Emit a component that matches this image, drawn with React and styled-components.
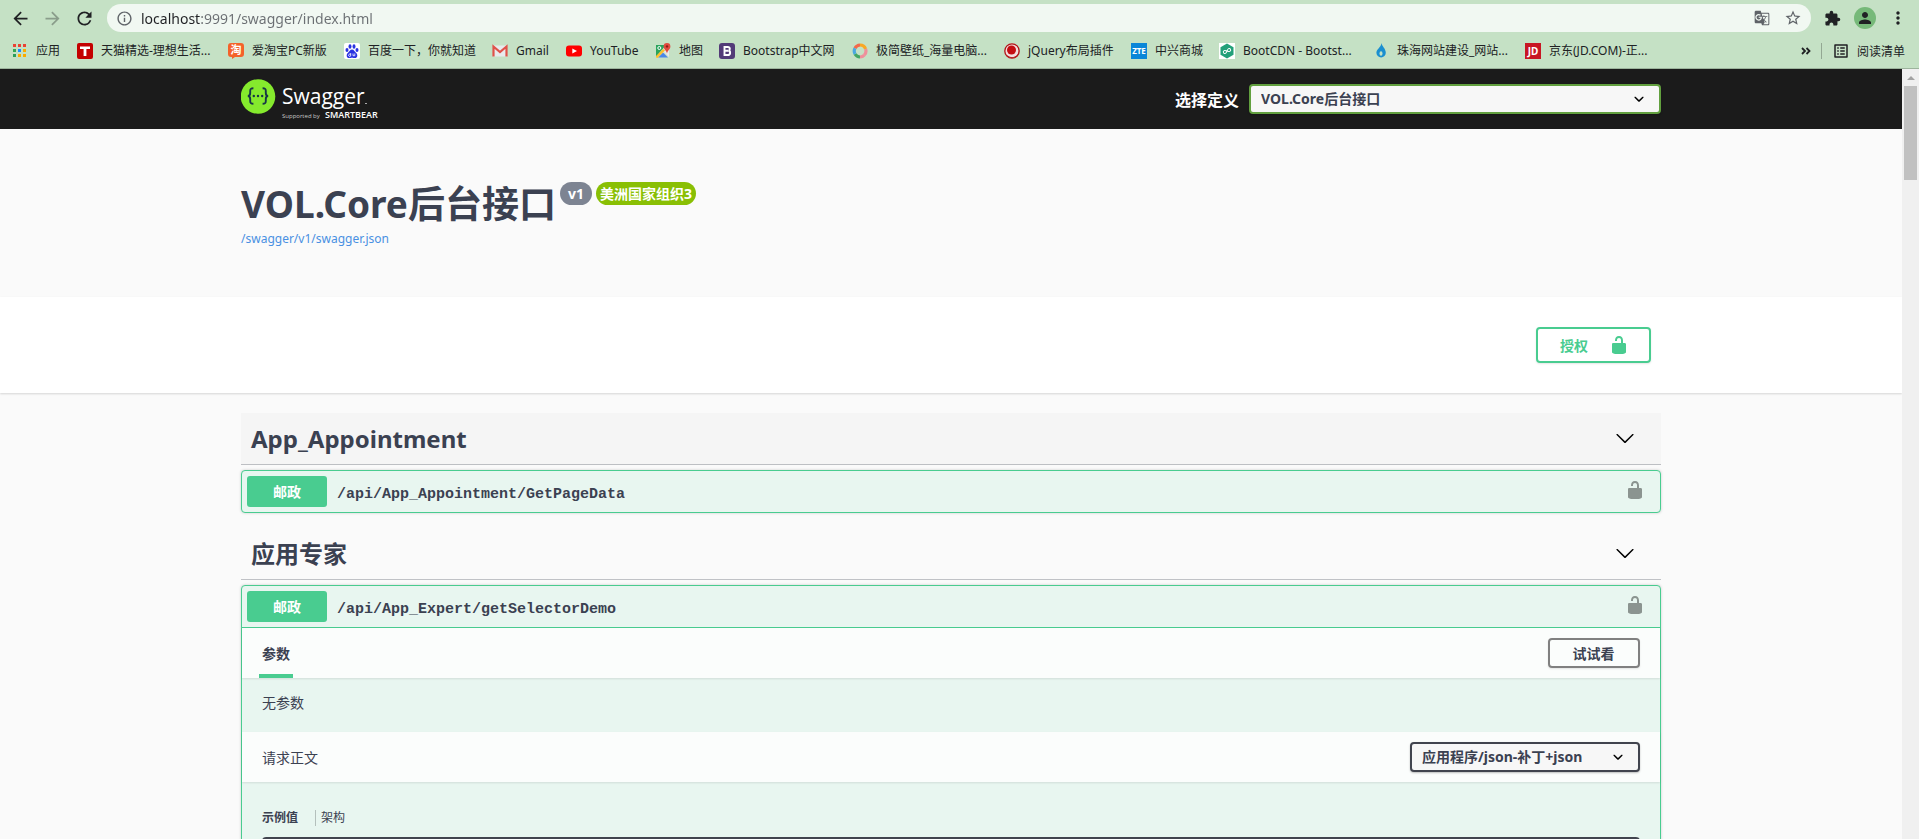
import React from "react";
import styled, { createGlobalStyle, css } from "styled-components";
import {
  MdArrowBack,
  MdArrowForward,
  MdRefresh,
  MdInfoOutline,
  MdGTranslate,
  MdStarBorder,
  MdExtension,
  MdPerson,
  MdMoreVert,
  MdOutlineListAlt,
} from "react-icons/md";

const ink = "#3b4151";
const green = "#49cc90";
const sans = `"Noto Sans", "Noto Sans CJK SC", sans-serif`;

const GlobalStyle = createGlobalStyle`
  *, *::before, *::after { box-sizing: border-box; }
  body { margin: 0; font-family: ${sans}; color: ${ink}; }
  h2, h3, p { margin: 0; }
  button, input, select { font-family: inherit; margin: 0; }
  button { cursor: pointer; }
  svg { display: block; flex: none; }
`;

/* ---------- browser frame ---------- */

const Window = styled.div`
  height: 100vh;
  display: flex;
  flex-direction: column;
  overflow: hidden;
`;

const BrowserBar = styled.header`
  flex: none;
  background: #c5e1c5;
  border-bottom: 1px solid #9db49d;
  color: #202124;
`;

const Toolbar = styled.div`
  display: flex;
  align-items: center;
  gap: 11px;
  height: 34px;
  padding: 2px 11px 0 10px;
`;

const IconButton = styled.button`
  display: grid;
  place-items: center;
  width: ${(p) => p.$width || 21}px;
  height: 22px;
  padding: 0;
  border: 0;
  border-radius: 50%;
  background: ${(p) => p.$fill || "none"};
  color: ${(p) => p.$color || "#202124"};
`;

const AddressBar = styled.div`
  flex: 1;
  display: flex;
  align-items: center;
  gap: 8px;
  height: 28px;
  margin-left: 1px;
  padding: 0 10px 0 9px;
  border-radius: 14px;
  background: #f1f8f2;
  color: #5f6368;
`;

const AddressInput = styled.input`
  flex: 1;
  min-width: 0;
  height: 24px;
  padding: 0;
  border: 0;
  outline: 0;
  font-size: 14px;
  color: #6b6f73;
  background: linear-gradient(to right, #202124 60px, #6b6f73 60px);
  background-clip: text;
  -webkit-text-fill-color: transparent;
`;

const AddressActions = styled.div`
  display: flex;
  gap: 12px;
`;

const BookmarkBar = styled.nav`
  display: flex;
  align-items: center;
  height: 34px;
  padding: 0 14px 0 12px;
`;

const Bookmark = styled.a`
  display: flex;
  align-items: center;
  gap: 8px;
  flex: none;
  width: ${(p) => p.$width}px;
  font-size: 12px;
  line-height: 20px;
  white-space: nowrap;
  color: #202124;
  text-decoration: none;
`;

const MoreBookmarks = styled.button`
  height: 16px;
  margin-left: auto;
  padding: 0 10px 0 0;
  border: 0;
  border-right: 1px solid #93a893;
  background: none;
  color: #202124;
`;

const ReadingList = styled.button`
  display: flex;
  align-items: center;
  gap: 7px;
  padding: 0 0 0 10px;
  border: 0;
  background: none;
  font-size: 12px;
  color: #202124;
`;

const Viewport = styled.div`
  flex: 1;
  min-height: 0;
  display: flex;
`;

const Page = styled.main`
  flex: 1;
  min-width: 0;
  overflow: hidden;
  background: #fafafa;
`;

const Scrollbar = styled.div`
  flex: none;
  width: 17px;
  display: flex;
  flex-direction: column;
  align-items: center;
  background: #f0f0f0;
`;

const ScrollArrow = styled.div`
  height: 17px;
  display: grid;
  place-items: center;
`;

const ScrollThumb = styled.div`
  width: 13px;
  height: 94px;
  background: #c1c1c1;
`;

/* ---------- page parts ---------- */

const Wrapper = styled.div`
  max-width: 1460px;
  margin: 0 auto;
  padding: 0 20px;
`;

const Topbar = styled.div`
  background: #1b1b1b;
`;

const TopbarRow = styled(Wrapper)`
  display: flex;
  align-items: center;
  justify-content: space-between;
  height: 60px;
`;

const SpecField = styled.div`
  display: flex;
  align-items: center;
  gap: 10px;
  flex: 0 1 486px;
`;

const SpecLabel = styled.label`
  flex: none;
  font-size: 16px;
  font-weight: 700;
  color: #fff;
`;

const SelectBox = styled.div`
  position: relative;
  flex: ${(p) => (p.$grow ? "1" : "0 0 230px")};

  svg {
    position: absolute;
    right: 12px;
    top: 5px;
    pointer-events: none;
  }
`;

const SelectInput = styled.select`
  appearance: none;
  display: block;
  width: 100%;
  height: 30px;
  padding: 0 40px 2px 10px;
  border: 2px solid ${(p) => p.$border};
  border-radius: 4px;
  background: #f7f7f7;
  box-shadow: 0 1px 2px rgba(0, 0, 0, 0.25);
  font-size: 14px;
  font-weight: 700;
  color: ${ink};
`;

const Info = styled(Wrapper)`
  padding-top: 50px;
  padding-bottom: 48px;
`;

const Title = styled.h2`
  display: flex;
  align-items: flex-start;
  gap: 4px;
  font-size: 37px;
  font-weight: 700;
  line-height: 50px;
`;

const Badge = styled.span`
  margin-top: 3px;
  padding: 0 ${(p) => (p.$wide ? 8 : 4)}px;
  border-radius: 12px;
  background: ${(p) => p.$fill};
  font-size: 14px;
  line-height: 23px;
  color: #fff;
`;

const SpecLink = styled.a`
  display: block;
  width: fit-content;
  font-size: 12px;
  line-height: 20px;
  color: #4990e2;
  text-decoration: none;
`;

const Scheme = styled.section`
  background: #fff;
  box-shadow: 0 1px 2px rgba(0, 0, 0, 0.15);
`;

const SchemeRow = styled(Wrapper)`
  display: flex;
  justify-content: flex-end;
  padding: 30px;
`;

const button = css`
  border: 2px solid;
  border-radius: 4px;
  background: transparent;
  box-shadow: 0 1px 2px rgba(0, 0, 0, 0.1);
  font-size: 14px;
  font-weight: 700;
`;

const AuthorizeButton = styled.button`
  ${button}
  display: flex;
  align-items: center;
  gap: 21px;
  height: 36px;
  padding: 0 20px 1px 22px;
  border-color: ${green};
  color: ${green};
`;

const TryButton = styled.button`
  ${button}
  width: 92px;
  height: 30px;
  padding: 0 1px 1px 0;
  border-color: gray;
  color: ${ink};
`;

const Operations = styled(Wrapper)`
  padding-top: 20px;
`;

const TagHeader = styled.div`
  display: flex;
  align-items: center;
  justify-content: space-between;
  height: 52px;
  margin-bottom: 5px;
  padding: 0 16px 0 10px;
  border-bottom: 1px solid rgba(59, 65, 81, 0.3);
  background: ${(p) => (p.$active ? "#f5f5f5" : "transparent")};
`;

const TagName = styled.h3`
  font-size: 24px;
  font-weight: 700;
  line-height: 32px;
`;

const ExpandButton = styled.button`
  padding: 0 10px 2px;
  border: 0;
  background: none;
  color: #000;
`;

const OpBlock = styled.article`
  margin-bottom: 15px;
  border: 1px solid ${green};
  border-radius: 4px;
  background: #e8f6f0;
  box-shadow: 0 0 3px rgba(0, 0, 0, 0.19);
`;

const OpSummary = styled.div`
  display: flex;
  align-items: center;
  padding: 5px;
  ${(p) => p.$open && `border-bottom: 1px solid ${green};`}
`;

const Method = styled.span`
  width: 80px;
  border-radius: 3px;
  background: ${green};
  font-size: 14px;
  font-weight: 700;
  line-height: 31px;
  text-align: center;
  color: #fff;
`;

const OpPath = styled.a`
  flex: 1;
  padding: 5px 10px 0;
  font-family: "Liberation Mono", monospace;
  font-size: 15px;
  font-weight: 700;
  color: ${ink};
  text-decoration: none;
`;

const OpLock = styled.button`
  padding: 0 10px 3px;
  border: 0;
  background: none;
  color: #8b9490;
`;

const SectionHeader = styled.div`
  display: flex;
  align-items: center;
  justify-content: space-between;
  height: 50px;
  padding: 0 20px;
  background: #fbfdfc;
  box-shadow: 0 1px 2px rgba(0, 0, 0, 0.1);
  font-size: 14px;
`;

const SectionTab = styled.span`
  align-self: stretch;
  margin: 0 -3px;
  padding: 4px 3px 0;
  border-bottom: 4px solid ${green};
  font-weight: 700;
  line-height: 44px;
`;

const EmptyNote = styled.p`
  padding: 15px 20px 19px;
  font-size: 14px;
  line-height: 20px;
`;

const Example = styled.div`
  padding: 28px 20px 20px;
`;

const ExampleTabs = styled.div`
  display: flex;
  align-items: center;
  margin-bottom: 11px;
`;

const ExampleTab = styled.button`
  height: 16px;
  padding: 0 17px 0 0;
  border: 0;
  background: none;
  font-size: 12px;
  font-weight: ${(p) => (p.$active ? 700 : 400)};
  line-height: 16px;
  color: ${ink};

  & + & {
    padding-left: 5px;
    border-left: 1px solid #b4c0bc;
  }
`;

const CodeBox = styled.pre`
  min-height: 120px;
  margin: 0;
  border-radius: 4px;
  background: #41444e;
`;

/* ---------- drawings ---------- */

const Lock = () => (
  <svg width="20" height="20" viewBox="0 0 20 20" fill="currentColor" aria-hidden="true">
    <path d="M15.8 8H14V5.6C14 2.703 12.665 1 10 1 7.334 1 6 2.703 6 5.6V6h2v-.801C8 3.754 8.797 3 10 3c1.203 0 2 .754 2 2.199V8H4c-.553 0-1 .646-1 1.199V17c0 .549.428 1.139.951 1.307l1.197.387C5.672 18.861 6.55 19 7.1 19h5.8c.549 0 1.428-.139 1.951-.307l1.196-.387c.524-.167.953-.757.953-1.306V9.199C17 8.646 16.352 8 15.8 8z" />
  </svg>
);

const LargeArrow = () => (
  <svg width="20" height="20" viewBox="0 0 20 20" fill="currentColor" aria-hidden="true">
    <path d="M17.418 6.109c.272-.268.709-.268.979 0s.271.701 0 .969l-7.908 7.83c-.27.268-.707.268-.979 0l-7.908-7.83c-.27-.268-.27-.701 0-.969.271-.268.709-.268.979 0L10 13.25l7.418-7.141z" />
  </svg>
);

const SmallArrow = () => (
  <svg width="20" height="20" viewBox="0 0 20 20" aria-hidden="true">
    <path d="M13.418 7.859c.271-.268.709-.268.978 0 .27.268.272.701 0 .969l-3.908 3.83c-.27.268-.707.268-.979 0l-3.908-3.83c-.27-.267-.27-.701 0-.969.271-.268.709-.268.978 0L10 11l3.418-3.141z" />
  </svg>
);

const DoubleArrow = () => (
  <svg width="10" height="8" viewBox="0 0 10 8" fill="none" stroke="currentColor" strokeWidth="1.8" aria-hidden="true">
    <path d="m1 1 3 3-3 3M5.500 1l3 3-3 3" />
  </svg>
);

const SwaggerLogo = () => (
  <svg width="150" height="44" viewBox="0 0 150 44" aria-label="Swagger">
    <circle cx="17" cy="19.500" r="17.300" fill="#85ea2d" />
    <g fill="none" stroke="#173647" strokeWidth="1.900">
      <path d="M12.400 11.200c-2.600 0-3.200.7-3.200 2.800v2c0 2-.5 3-2.400 3 1.900 0 2.400 1 2.400 3v2c0 2.100.6 2.800 3.200 2.800" />
      <path d="M21.600 11.200c2.600 0 3.200.7 3.200 2.800v2c0 2 .5 3 2.400 3-1.900 0-2.400 1-2.400 3v2c0 2.100-.6 2.800-3.200 2.800" />
    </g>
    <g fill="#173647">
      <circle cx="12.800" cy="19" r="1.200" />
      <circle cx="17" cy="19" r="1.200" />
      <circle cx="21.200" cy="19" r="1.200" />
    </g>
    <g fill="#fff" fontFamily="Open Sans, sans-serif">
      <text x="41" y="27" fontSize="21" fontWeight="400">Swagger</text>
      <text x="41" y="41" fontSize="6" fill="#c8c8c8">Supported by</text>
      <text x="84" y="41" fontSize="9" fontWeight="600">SMARTBEAR</text>
      <rect x="124" y="26" width="2" height="1" fill="#aaa" />
    </g>
  </svg>
);

const Tile = ({ fill, radius = 0, children }) => (
  <>
    <rect width="16" height="16" rx={radius} fill={fill} />
    {children}
  </>
);

const IconText = ({ size, y, x = 8, children }) => (
  <text x={x} y={y} fontSize={size} fontWeight="700" fill="#fff" textAnchor="middle" fontFamily={sans}>
    {children}
  </text>
);

const appColors = ["#ea4335", "#ea4335", "#ea4335", "#34a853", "#1a8cff", "#fbab00", "#2a9d5c", "#fbab00", "#fbab00"];

const marks = {
  apps: appColors.map((c, i) => (
    <rect key={i} x={1 + (i % 3) * 5} y={1 + Math.floor(i / 3) * 5} width="3" height="3" fill={c} />
  )),
  tmall: (
    <Tile fill="#c40000" radius={2}>
      <path d="M3 3.500h10v2.500H9.400V13H6.600V6H3z" fill="#fff" />
    </Tile>
  ),
  taobao: (
    <>
      <path d="M3 0h10a3 3 0 0 1 3 3v8a3 3 0 0 1-3 3H7l-3 2v-2H3a3 3 0 0 1-3-3V3a3 3 0 0 1 3-3z" fill="#f4622a" />
      <IconText size={11} y={11}>淘</IconText>
    </>
  ),
  baidu: (
    <Tile fill="#fff" radius={2}>
      <g fill="#2932e1">
        <ellipse cx="3" cy="7" rx="1.500" ry="2" />
        <ellipse cx="6" cy="3.500" rx="1.500" ry="2.200" />
        <ellipse cx="10" cy="3.500" rx="1.500" ry="2.200" />
        <ellipse cx="13" cy="7" rx="1.500" ry="2" />
        <path d="M8 6.500c2 0 2.600 2 4 3.200 2.300 2 1.300 5.300-1 5.300-1.300 0-2-.3-3-.3s-1.700.3-3 .3c-2.300 0-3.300-3.300-1-5.300C5.400 8.500 6 6.500 8 6.500z" />
      </g>
      <path d="M6.700 10v3M6.700 11.500a1.200 1.200 0 1 0 0 1.500M9 10.500v2.200h1.800v-2.200" fill="none" stroke="#fff" strokeWidth=".8" />
    </Tile>
  ),
  gmail: (
    <>
      <path d="M1 2.500h14v11H1z" fill="#e8eaed" />
      <path d="M1.500 13.500V3.500L8 9l6.500-5.500v10" fill="none" stroke="#e0524a" strokeWidth="2.200" />
    </>
  ),
  youtube: (
    <>
      <rect y="2.500" width="16" height="11" rx="3" fill="#f00" />
      <path d="M6.300 5.500 11 8l-4.700 2.500z" fill="#fff" />
    </>
  ),
  maps: (
    <>
      <path d="M1 2h10L1 14z" fill="#2aa45c" />
      <path d="m1 14 10-11 3 3v8l-5-5-5 5z" fill="#e8e8e8" />
      <path d="m3 14.500 5-5 5 5z" fill="#4a86e8" />
      <path d="m1 13 7-7 2 1.500L2.500 15 1 14.500z" fill="#fbc02d" />
      <path d="M12 0a3.400 3.400 0 0 1 3.400 3.400c0 2.500-2.600 3.600-3.400 7-.8-3.400-3.400-4.500-3.400-7A3.400 3.400 0 0 1 12 0z" fill="#e04a3f" />
      <circle cx="12" cy="3.400" r="1.200" fill="#8c1d18" />
      <circle cx="4.300" cy="5" r="1.500" fill="none" stroke="#fff" />
    </>
  ),
  bootstrap: (
    <Tile fill="#533b78" radius={3}>
      <path d="M5.500 4h3.300c2.600 0 2.600 3.400.6 3.800 2.500.4 2.300 4.200-.6 4.200H5.500zm0 3.800h3.500" fill="none" stroke="#fff" strokeWidth="1.900" />
    </Tile>
  ),
  ring: (
    <g fill="none" strokeWidth="3.200">
      <path d="M3 5.200A6 6 0 0 1 8 2" stroke="#f26a4b" />
      <path d="M8 2a6 6 0 0 1 5.600 4" stroke="#f9a825" />
      <path d="M13.600 6a6 6 0 0 1-1.200 6" stroke="#ef8f9b" />
      <path d="M12.400 12A6 6 0 0 1 8 14" stroke="#ef8f9b" />
      <path d="M8 14a6 6 0 0 1-5-3" stroke="#43a663" />
      <path d="M3 11a6 6 0 0 1 0-5.800" stroke="#4aa8e0" />
    </g>
  ),
  jquery: (
    <>
      <circle cx="8" cy="8" r="7.200" fill="#f3dede" stroke="#b31217" strokeWidth="1.300" />
      <circle cx="7.500" cy="7" r="4.500" fill="#c40d12" />
      <path d="M1.500 9c1 5 8 7 11.500 3 2-2.500 2-6 .5-8 2.500 4 1.500 9-3 10.500C6 16 2 13 1.500 9z" fill="#b31217" />
    </>
  ),
  zte: (
    <Tile fill="#0a86d8">
      <IconText size={8} y={11}>ZTE</IconText>
    </Tile>
  ),
  bootcdn: (
    <Tile fill="#fff">
      <path d="m8 .5 6.500 3.700v7.600L8 15.500l-6.500-3.700V4.200z" fill="#22a079" />
      <path d="M8 8C7 7.200 6.500 6.500 5.600 6.500a1.500 1.500 0 0 0 0 3C6.500 9.500 7.200 8.800 8 8s1.500-1.500 2.400-1.500a1.500 1.500 0 0 1 0 3C9.500 9.500 9 8.800 8 8z" fill="none" stroke="#fff" strokeWidth="1" transform="rotate(-25 8 8)" />
    </Tile>
  ),
  flame: (
    <>
      <path d="M8.500 0c.2 3 4.300 5.500 4.300 9.800a4.700 4.700 0 0 1-9.400 0C3.400 6 8 4.500 8.500 0z" fill="#1b8fd0" />
      <ellipse cx="8" cy="10.500" rx="1.500" ry="2.300" fill="#c5e1c5" />
    </>
  ),
  jd: (
    <Tile fill="#c81623">
      <IconText size={10} y={12}>JD</IconText>
    </Tile>
  ),
};

const bookmarks = [
  { mark: "apps", text: "应用", width: 65 },
  { mark: "tmall", text: "天猫精选-理想生活...", width: 151 },
  { mark: "taobao", text: "爱淘宝PC新版", width: 116 },
  { mark: "baidu", text: "百度一下，你就知道", width: 148 },
  { mark: "gmail", text: "Gmail", width: 74 },
  { mark: "youtube", text: "YouTube", width: 89 },
  { mark: "maps", text: "地图", width: 64 },
  { mark: "bootstrap", text: "Bootstrap中文网", width: 133 },
  { mark: "ring", text: "极简壁纸_海量电脑...", width: 152 },
  { mark: "jquery", text: "jQuery布局插件", width: 127 },
  { mark: "zte", text: "中兴商城", width: 88 },
  { mark: "bootcdn", text: "BootCDN - Bootst...", width: 154 },
  { mark: "flame", text: "珠海网站建设_网站...", width: 152 },
  { mark: "jd", text: "京东(JD.COM)-正...", width: 130 },
];

/* ---------- composition ---------- */

const Select = ({ id, border, grow, children }) => (
  <SelectBox $grow={grow}>
    <SelectInput id={id} $border={border}>
      <option>{children}</option>
    </SelectInput>
    <SmallArrow />
  </SelectBox>
);

const Tag = ({ name, active }) => (
  <TagHeader $active={active}>
    <TagName>{name}</TagName>
    <ExpandButton aria-label={name}>
      <LargeArrow />
    </ExpandButton>
  </TagHeader>
);

const Operation = ({ path, children }) => (
  <OpBlock>
    <OpSummary $open={Boolean(children)}>
      <Method>邮政</Method>
      <OpPath href="#">{path}</OpPath>
      <OpLock aria-label="授权">
        <Lock />
      </OpLock>
    </OpSummary>
    {children}
  </OpBlock>
);

export default function App() {
  return (
    <Window>
      <GlobalStyle />
      <BrowserBar>
        <Toolbar>
          <IconButton aria-label="后退"><MdArrowBack size={21} /></IconButton>
          <IconButton aria-label="前进" $color="#8a9d8b"><MdArrowForward size={21} /></IconButton>
          <IconButton aria-label="刷新"><MdRefresh size={21} /></IconButton>
          <AddressBar>
            <MdInfoOutline size={17} />
            <AddressInput aria-label="地址" defaultValue="localhost:9991/swagger/index.html" />
            <AddressActions>
              <IconButton aria-label="翻译" $color="#5f6368"><MdGTranslate size={16} /></IconButton>
              <IconButton aria-label="收藏" $color="#5f6368" $width={17}><MdStarBorder size={18} /></IconButton>
            </AddressActions>
          </AddressBar>
          <IconButton aria-label="扩展程序"><MdExtension size={17} /></IconButton>
          <IconButton aria-label="用户" $width={22} $fill="#76b979"><MdPerson size={18} /></IconButton>
          <IconButton aria-label="菜单"><MdMoreVert size={20} /></IconButton>
        </Toolbar>
        <BookmarkBar>
          {bookmarks.map((b) => (
            <Bookmark key={b.mark} href="#" $width={b.width}>
              <svg width="16" height="16" viewBox="0 0 16 16" aria-hidden="true">
                {marks[b.mark]}
              </svg>
              {b.text}
            </Bookmark>
          ))}
          <MoreBookmarks aria-label="更多书签">
            <DoubleArrow />
          </MoreBookmarks>
          <ReadingList>
            <MdOutlineListAlt size={18} />
            阅读清单
          </ReadingList>
        </BookmarkBar>
      </BrowserBar>

      <Viewport>
        <Page>
          <Topbar>
            <TopbarRow>
              <SwaggerLogo />
              <SpecField>
                <SpecLabel htmlFor="spec">选择定义</SpecLabel>
                <Select id="spec" border="#62a03f" grow>VOL.Core后台接口</Select>
              </SpecField>
            </TopbarRow>
          </Topbar>

          <Info>
            <Title>
              VOL.Core后台接口
              <Badge $fill="#7d8492" $wide>v1</Badge>
              <Badge $fill="#89bf04">美洲国家组织3</Badge>
            </Title>
            <SpecLink href="#">/swagger/v1/swagger.json</SpecLink>
          </Info>

          <Scheme>
            <SchemeRow>
              <AuthorizeButton>
                授权
                <Lock />
              </AuthorizeButton>
            </SchemeRow>
          </Scheme>

          <Operations>
            <Tag name="App_Appointment" active />
            <Operation path="/api/App_Appointment/GetPageData" />
            <Tag name="应用专家" />
            <Operation path="/api/App_Expert/getSelectorDemo">
              <SectionHeader>
                <SectionTab>参数</SectionTab>
                <TryButton>试试看</TryButton>
              </SectionHeader>
              <EmptyNote>无参数</EmptyNote>
              <SectionHeader>
                <label htmlFor="media">请求正文</label>
                <Select id="media" border="#41444e">应用程序/json-补丁+json</Select>
              </SectionHeader>
              <Example>
                <ExampleTabs>
                  <ExampleTab $active>示例值</ExampleTab>
                  <ExampleTab>架构</ExampleTab>
                </ExampleTabs>
                <CodeBox />
              </Example>
            </Operation>
          </Operations>
        </Page>
        <Scrollbar aria-hidden="true">
          <ScrollArrow>
            <svg width="8" height="4" viewBox="0 0 8 4">
              <path d="M0 4 4 0l4 4z" fill="#a3a3a3" />
            </svg>
          </ScrollArrow>
          <ScrollThumb />
        </Scrollbar>
      </Viewport>
    </Window>
  );
}
